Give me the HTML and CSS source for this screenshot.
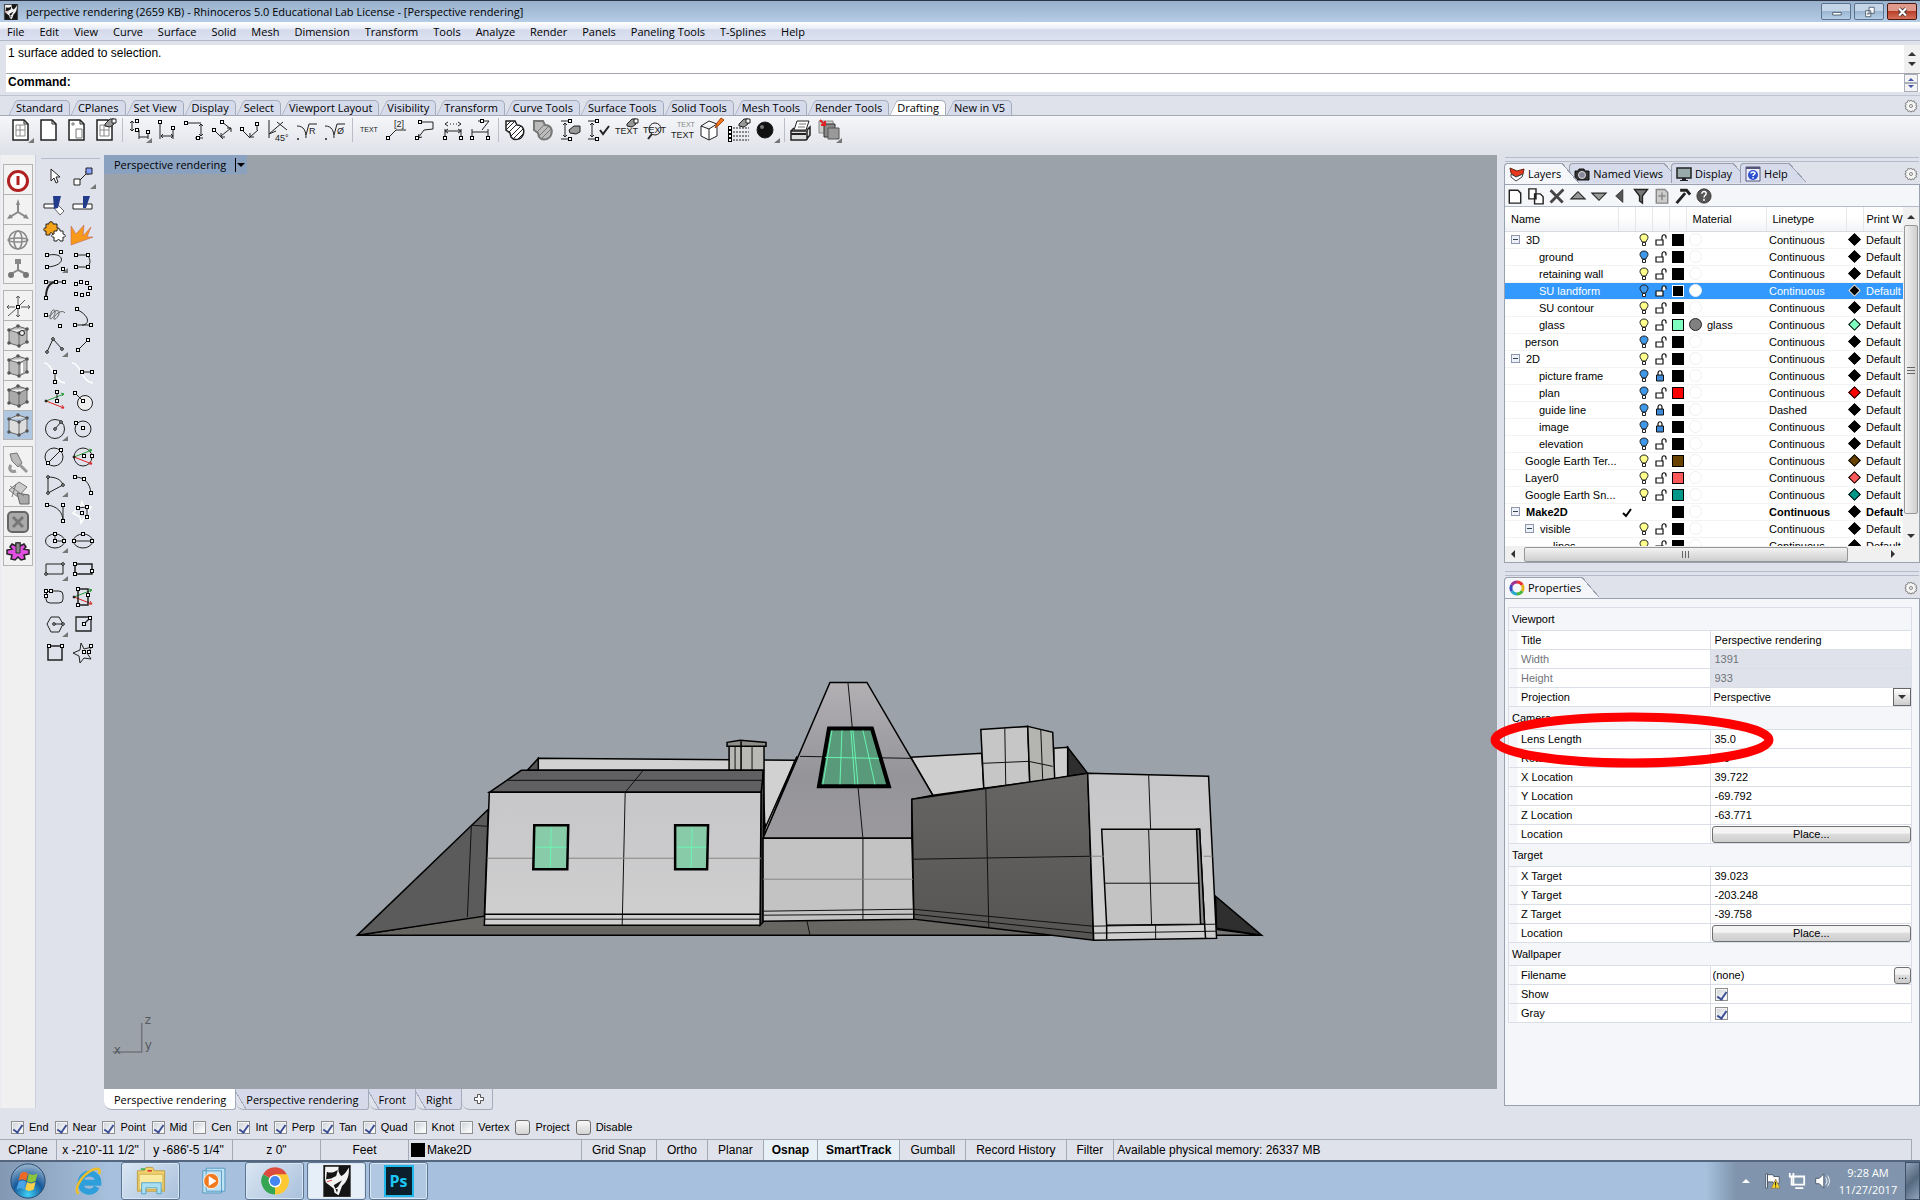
FILE: index.html
```
<!DOCTYPE html>
<html lang="en">
<head>
  <meta charset="UTF-8" />
  <meta name="viewport" content="width=device-width, initial-scale=1.0"/>
  <title>perpective rendering (2659 KB) - Rhinoceros 5.0</title>
  <link rel="stylesheet" href="styles.css">
</head>
<body>
  <svg class="defs" aria-hidden="true">
    <symbol id="gear" viewBox="0 0 14 14"><path d="M7 1l1 1.600 2-.8 .6 2 2 .6-.8 2L13.200 7l-1.400 1 .8 2-2 .6-.6 2-2-.8L7 13.200l-1-1.400-2 .8-.6-2-2-.6 .8-2L.8 7l1.400-1-.8-2 2-.6 .6-2 2 .8z" fill="#f4f4f4" stroke="#888"/><circle cx="7" cy="7" r="1.500" fill="none" stroke="#888"/></symbol>
    <symbol id="rhino" viewBox="0 0 32 38"><path fill="#151515" stroke="#555" d="M0 0h32v38H0z"/><path fill="#f2f2f2" d="M2 2h16c-1 4 0 8 3 11 3-1 6-4 9-10 1 9-2 17-8 22l-4 11-5-3-1-5-5-4-4-3c-2-5-1-12-1-19z"/><path fill="#151515" d="M4 8c4 2 8 1 13-2l-2 7-6 3-6 1zM12 24l10-6-5 8-3 2zM14 28l3 1-1 4z"/><path stroke="#d22" fill="none" d="M4 20l6-2"/></symbol>
    <symbol id="bulb" viewBox="0 0 10 14"><path stroke="#222" d="M5 1C2.500 1 1 2.500 1 4.500 1 6.500 3 7.500 3 9h4c0-1.500 2-2.500 2-4.500C9 2.500 7.500 1 5 1z"/><path fill="#fff" stroke="#222" d="M3.500 9.500h3v3h-3z"/></symbol>
    <symbol id="lock-open" viewBox="0 0 12 14"><path fill="#fff" stroke="#111" stroke-width="1.200" d="M1 7h7v5H1zM7 7V4c0-3 4-3 4 0v1.500"/></symbol>
    <symbol id="lock-shut" viewBox="0 0 12 14"><path fill="none" stroke="#111" stroke-width="1.200" d="M3 6V4c0-3 4-3 4 0v2"/><path fill="#3f8ad8" stroke="#111" d="M1.500 6h7v6h-7z"/></symbol>
    <symbol id="tick" viewBox="0 0 12 12"><path fill="none" stroke="#000" stroke-width="2" d="M2 7l3 3 5-7"/></symbol>
  </svg>

  <header class="titlebar">
    <svg class="title-icon"><use href="#rhino"/></svg>
    <h1>perpective rendering (2659 KB) - Rhinoceros 5.0 Educational Lab License - [Perspective rendering]</h1>
    <div class="window-buttons">
      <button aria-label="Minimize"><svg viewBox="0 0 16 14"><path fill="#fff" stroke="#456" d="M3.500 7.500h10v3h-10z"/></svg></button>
      <button aria-label="Restore"><svg viewBox="0 0 16 14"><path fill="#fff" stroke="#456" d="M7.500 1.500h6v7h-6zM3.500 5.500h6v7h-6z"/><path fill="#789" d="M5 8h3v2H5z"/></svg></button>
      <button class="close" aria-label="Close"><svg viewBox="0 0 16 14"><path stroke="#433" stroke-width="4.500" d="M4 3l8 8M12 3l-8 8"/><path stroke="#fff" stroke-width="2.500" d="M4 3l8 8M12 3l-8 8"/></svg></button>
    </div>
  </header>

  <nav class="menubar">
    <button>File</button><button>Edit</button><button>View</button><button>Curve</button><button>Surface</button><button>Solid</button><button>Mesh</button><button>Dimension</button><button>Transform</button><button>Tools</button><button>Analyze</button><button>Render</button><button>Panels</button><button>Paneling Tools</button><button>T-Splines</button><button>Help</button>
  </nav>

  <section class="command">
    <div class="history">
      <p>1 surface added to selection.</p>
      <div class="mini-scroll"><i class="arrow up"></i><i class="arrow down"></i></div>
    </div>
    <div class="prompt">
      <label for="cmd">Command:</label>
      <input id="cmd" type="text">
      <div class="spinner"><i class="arrow up"></i><i class="arrow down"></i></div>
    </div>
  </section>

  <div class="tool-tabs">
    <button>Standard</button><button>CPlanes</button><button>Set View</button><button>Display</button><button>Select</button><button>Viewport Layout</button><button>Visibility</button><button>Transform</button><button>Curve Tools</button><button>Surface Tools</button><button>Solid Tools</button><button>Mesh Tools</button><button>Render Tools</button><button class="active">Drafting</button><button>New in V5</button>
    <svg class="gear"><use href="#gear"/></svg>
  </div>
  <div class="toolbar" id="drafting"></div>

  <main class="workspace">
    <aside class="filter-bar" id="filters"></aside>
    <aside class="main-tools"><div class="tool-grid" id="mainTools"></div></aside>

    <section class="view">
      <div class="viewport">
        <button class="view-title">Perspective rendering <span><i class="arrow down"></i></span></button>
        <svg class="model" viewBox="104 155 1393 935" role="img" aria-label="House model">
          <defs>
            <linearGradient id="pyr" x1="0" y1="0" x2="0" y2="1"><stop offset="0" stop-color="#b2b0b3"/><stop offset=".6" stop-color="#959499"/><stop offset="1" stop-color="#9b999d"/></linearGradient>
            <linearGradient id="wall" x1="0" y1="0" x2="0" y2="1"><stop offset="0" stop-color="#c7c6c8"/><stop offset="1" stop-color="#d0cfd0"/></linearGradient>
            <linearGradient id="dark" x1="0" y1="0" x2="0" y2="1"><stop offset="0" stop-color="#666563"/><stop offset="1" stop-color="#565554"/></linearGradient>
          </defs>
          <g class="edge">
            <!-- ground and fins -->
            <path fill="#686663" d="M357 936l127-20 434-1 180 21z"/>
            <path fill="#5b5b5b" d="M357 936l131-126-4 107z"/>
            <path fill="#777" d="M1216 930l46 6h-46z"/>
            <path fill="#2f2f2f" d="M1216 897l46 39-45-7z"/>
            <!-- back walls -->
            <path fill="#d2d1d2" d="M538 759l257 2-30 75-2-65H538z"/>
            <path fill="#555" d="M527 771l11-12v12z"/>
            <path fill="#cfcecf" d="M911 758l71-4 2 35-51 7z"/>
            <path fill="#cfcecf" d="M1054 749l14-1v29l-14 3z"/>
            <path fill="#2e2e2e" d="M1068 748l20 26-20 3z"/>
            <!-- chimneys -->
            <path fill="#b8b8b4" d="M729 747h35v24h-35z"/>
            <path fill="#8e8e8b" d="M727 743l13-2 26 2v4h-39z"/>
            <path fill="#c6c6c7" d="M981 730l47-3 2 56-46 6z"/>
            <path fill="#b4b4b1" d="M1028 727l25 6 2 47-25 3z"/>
            <!-- left wing -->
            <path fill="#606063" d="M489 793l32-22h242l-1 22z"/>
            <path fill="#444" d="M761 793l3-22-1 152-3 3z"/>
            <path fill="url(#wall)" d="M489 793h272l-1 133H484z"/>
            <!-- centre -->
            <path fill="url(#pyr)" d="M830 683h37l66 113-21 4v39H763z"/>
            <path fill="#c4c3c4" d="M763 839h149l2 81-151 2z"/>
            <!-- garage -->
            <path fill="url(#dark)" d="M912 800l176-26 6 167-180-21z"/>
            <path fill="url(#wall)" d="M1088 774l121 3 8 162-123 2z"/>
            <path fill="#c4c3c4" d="M1102 830h98l5 95-98 1z"/>
            <path fill="#888" d="M1197 830h3l5 95h-4z"/>
          </g>
          <path class="thin" d="M471 827l-4 91M471 826l16 1M807 922l3 14M507 781h256M643 771l-18 22M625 793l-3 133M484 920h277M735 747v24M752 747v24M848 683l15 156v81M800 757l111 2M763 912l150-2M763 916l150-1M1005 729l1 57M982 764l47-2 24 5M1041 730l2 51M986 789l3 139M912 860l179-3M913 910l180 17M913 915l181 19M1149 775l2 55M1093 927l124-2M1094 934l123-2M1149 830l3 96M1105 884h95M1156 926v14"/>
          <path class="soft" d="M487 859h274M763 880h150M1091 857h13M1204 857h9"/>
          <path class="edge" fill="none" d="M484 915h277M741 742v29M797 757l-32 72M1107 926v14M1205 925l1 14M765 824v6"/>
          <path class="glass" d="M534 826h34l-1 44h-34zM675 826h33l-1 44h-32z"/>
          <path class="glow" d="M551 828l-1 40M536 848h30M692 828l-1 40M677 848h29"/>
          <path class="glass deep" d="M829 729h43l17 58-70 0z"/>
          <path class="glow" d="M825 758l54 1M832 731l-9 54M842 731l-2 54M851 731l4 54M853 731l5 54M863 731l12 54"/>
          <g class="axis"><path d="M141 1024v29h-29"/><text x="144" y="1025">z</text><text x="144" y="1050">y</text><text x="113" y="1055">x</text></g>
        </svg>
      </div>
      <div class="view-tabs">
        <button class="active">Perspective rendering</button><button>Perspective rendering</button><button>Front</button><button>Right</button><button class="plus" aria-label="New viewport"><svg viewBox="0 0 10 10"><path fill="#fff" stroke="#555" d="M3.500 .5h3v3h3v3h-3v3h-3v-3h-3v-3h3z"/></svg></button>
      </div>
    </section>

    <aside class="panels">
      <section class="panel layers">
        <div class="panel-tabs">
          <button class="active"><svg viewBox="0 0 16 16"><path fill="#e8371c" stroke="#621" d="M1 2l7 3 7-2-1 5-7 3-5-4z"/><path fill="#fff" stroke="#444" d="M2 8l5 3 7-3-1 3-6 4-5-4z"/></svg>Layers</button>
          <button><svg viewBox="0 0 16 16"><path fill="#333" stroke="#111" d="M1 5h3l1-2h5l1 2h4v9H1z"/><circle cx="8" cy="9" r="3.500" fill="#889" stroke="#ddd"/></svg>Named Views</button>
          <button><svg viewBox="0 0 16 16"><path fill="#9aa" stroke="#222" stroke-width="1.500" d="M1 2h14v10H1z"/><path fill="#222" d="M6 12h4v2h2v1H4v-1h2z"/></svg>Display</button>
          <button><svg viewBox="0 0 16 16"><path fill="#eef" stroke="#557" d="M1 1h14v14H1z"/><path fill="#557" d="M1 1h14v2H1z"/><circle cx="8" cy="9" r="5" fill="#2a4fd0"/><path fill="none" stroke="#fff" stroke-width="1.500" d="M6 7.500c0-2 4-2 4 0 0 1-2 1-2 2.500M8 11v1.500"/></svg>Help</button>
          <svg class="gear"><use href="#gear"/></svg>
        </div>
        <div class="layer-tools" id="layerTools"></div>
        <div class="layer-grid">
          <div class="layer-scroll">
            <table class="layer-table">
              <colgroup><col class="c-name"><col class="c-ico"><col class="c-ico"><col class="c-ico"><col class="c-ico"><col class="c-wide"><col class="c-wide"><col class="c-ico"><col></colgroup>
              <thead><tr><th>Name</th><th></th><th></th><th></th><th></th><th>Material</th><th>Linetype</th><th></th><th class="last">Print W</th></tr></thead>
              <tbody id="layerRows"></tbody>
            </table>
          </div>
          <div class="vscroll"><i class="arrow up"></i><div class="thumb"></div><i class="arrow down"></i></div>
        </div>
        <div class="hscroll"><i class="arrow left"></i><div class="thumb"></div><i class="arrow right"></i></div>
      </section>

      <section class="panel props">
        <div class="panel-tabs">
          <button class="active"><svg viewBox="0 0 16 16" fill="none" stroke-width="3"><path stroke="#e33" d="M8 2a6 6 0 0 1 5.200 3"/><path stroke="#e5b21c" d="M13.200 5a6 6 0 0 1 0 6"/><path stroke="#4cb83a" d="M13.200 11A6 6 0 0 1 8 14"/><path stroke="#28a9c9" d="M8 14a6 6 0 0 1-5.200-3"/><path stroke="#3a49c0" d="M2.800 11a6 6 0 0 1 0-6"/><path stroke="#a2318f" d="M2.800 5A6 6 0 0 1 8 2"/></svg>Properties</button>
          <svg class="gear"><use href="#gear"/></svg>
        </div>
        <table class="prop-table">
          <tbody>
            <tr class="group"><th colspan="2">Viewport</th></tr>
            <tr><th><label for="p-title">Title</label></th><td><input id="p-title" type="text" value="Perspective rendering"></td></tr>
            <tr class="off"><th><label for="p-w">Width</label></th><td><input id="p-w" type="text" value="1391" disabled></td></tr>
            <tr class="off"><th><label for="p-h">Height</label></th><td><input id="p-h" type="text" value="933" disabled></td></tr>
            <tr><th><label for="p-proj">Projection</label></th><td class="select-cell"><select id="p-proj"><option>Perspective</option><option>Parallel</option></select><span class="drop"><i class="arrow down"></i></span></td></tr>
            <tr class="group"><th colspan="2">Camera</th></tr>
            <tr><th><label for="p-lens">Lens Length</label></th><td><input id="p-lens" type="text" value="35.0"></td></tr>
            <tr><th><label for="p-rot">Rotation</label></th><td><input id="p-rot" type="text" value="0.0"></td></tr>
            <tr><th><label for="p-x">X Location</label></th><td><input id="p-x" type="text" value="39.722"></td></tr>
            <tr><th><label for="p-y">Y Location</label></th><td><input id="p-y" type="text" value="-69.792"></td></tr>
            <tr><th><label for="p-z">Z Location</label></th><td><input id="p-z" type="text" value="-63.771"></td></tr>
            <tr><th><label for="p-loc">Location</label></th><td><button id="p-loc" class="place">Place...</button></td></tr>
            <tr class="group"><th colspan="2">Target</th></tr>
            <tr><th><label for="t-x">X Target</label></th><td><input id="t-x" type="text" value="39.023"></td></tr>
            <tr><th><label for="t-y">Y Target</label></th><td><input id="t-y" type="text" value="-203.248"></td></tr>
            <tr><th><label for="t-z">Z Target</label></th><td><input id="t-z" type="text" value="-39.758"></td></tr>
            <tr><th><label for="t-loc">Location</label></th><td><button id="t-loc" class="place">Place...</button></td></tr>
            <tr class="group"><th colspan="2">Wallpaper</th></tr>
            <tr><th><label for="w-file">Filename</label></th><td><div class="file-cell"><input id="w-file" type="text" value="(none)"><button class="dots">...</button></div></td></tr>
            <tr><th><label for="w-show">Show</label></th><td><input id="w-show" type="checkbox" checked></td></tr>
            <tr><th><label for="w-gray">Gray</label></th><td><input id="w-gray" type="checkbox" checked></td></tr>
          </tbody>
        </table>
        <svg class="mark" viewBox="0 0 284 56"><ellipse cx="142" cy="28" rx="137" ry="23"/></svg>
      </section>
    </aside>
  </main>

  <div class="osnap">
    <label><input type="checkbox" checked>End</label>
    <label><input type="checkbox" checked>Near</label>
    <label><input type="checkbox" checked>Point</label>
    <label><input type="checkbox" checked>Mid</label>
    <label><input type="checkbox">Cen</label>
    <label><input type="checkbox" checked>Int</label>
    <label><input type="checkbox" checked>Perp</label>
    <label><input type="checkbox" checked>Tan</label>
    <label><input type="checkbox" checked>Quad</label>
    <label><input type="checkbox">Knot</label>
    <label><input type="checkbox">Vertex</label>
    <label class="push"><input type="checkbox">Project</label>
    <label class="push"><input type="checkbox">Disable</label>
  </div>

  <footer class="status">
    <span class="w-cplane">CPlane</span><span class="w-coord">x -210'-11 1/2"</span><span class="w-coord">y -686'-5 1/4"</span><span class="w-coord">z 0"</span><span class="w-coord">Feet</span>
    <span class="w-layer"><i class="swatch"></i>Make2D</span>
    <button>Grid Snap</button><button>Ortho</button><button>Planar</button><button class="on">Osnap</button><button class="on">SmartTrack</button><button>Gumball</button><button>Record History</button><button>Filter</button>
    <span class="w-mem">Available physical memory: 26337 MB</span>
  </footer>

  <div class="taskbar">
    <button class="task start" aria-label="Start"><svg viewBox="0 0 40 40">
      <defs><radialGradient id="orb" cx=".5" cy=".9" r=".9"><stop offset="0" stop-color="#3fd0f5"/><stop offset=".5" stop-color="#17599b"/><stop offset="1" stop-color="#9fb9cf"/></radialGradient></defs>
      <circle cx="20" cy="20" r="18" fill="url(#orb)" stroke="#24486e"/>
      <path fill="#ee6a26" d="M12 12c3-2 5-2 8 0l-2 8c-3-2-5-2-8 0z"/><path fill="#8cc43c" d="M21 12c3 2 5 2 9 0l-2 8c-4 2-6 2-9 0z"/><path fill="#4ba3e8" d="M10 21c3-2 5-2 8 0l-2 8c-3-2-5-2-8 0z"/><path fill="#fbd04a" d="M19 21c3 2 5 2 9 0l-2 8c-4 2-6 2-9 0z"/></svg></button>
    <button class="task" aria-label="Internet Explorer"><svg viewBox="0 0 40 40"><path fill="none" stroke="#2f9fdc" stroke-width="7" d="M10 22h21c0-14-20-15-21 0 0 12 15 14 19 5"/><path fill="none" stroke="#eebd2c" stroke-width="3" d="M8 35c-7-4 3-22 16-28 7-3 10-1 8 5"/></svg></button>
    <button class="task framed" aria-label="Explorer"><svg viewBox="0 0 40 40"><path fill="#f0d36c" stroke="#b8953a" d="M4 8h8l2-4h8l2 4h12v24H4z"/><path fill="#fbeaa0" stroke="#cba94c" d="M6 12h28v18H6z"/><path fill="#3fb24a" d="M8 5h5v2H8z"/><path fill="#d33" d="M16 7h5v2h-5z"/><path fill="#a9dff2" stroke="#4a9cc4" d="M9 35V22h23v13h-5v-7H14v7z"/></svg></button>
    <button class="task" aria-label="Media Player"><svg viewBox="0 0 40 40"><path fill="#bfe3f3" stroke="#4a91bd" d="M12 5h22v27H12zM8 8h22v26H8z"/><circle cx="18" cy="20" r="9" fill="#f07a1d" stroke="#fff"/><path fill="#fff" d="M15 14l9 6-9 6z"/></svg></button>
    <button class="task framed" aria-label="Chrome"><svg viewBox="0 0 40 40"><path fill="#dd4b3e" d="M20 20L6 12a16 16 0 0 1 28 0z"/><path fill="#fcc934" d="M20 20l14-8a16 16 0 0 1-14 24z"/><path fill="#35a553" d="M20 20v16A16 16 0 0 1 6 12z"/><path fill="#fcc934" d="M20 36l7-13-7-11 14 0a16 16 0 0 1-14 24z"/><circle cx="20" cy="20" r="7.500" fill="#fff"/><circle cx="20" cy="20" r="6" fill="#4487f2"/></svg></button>
    <button class="task framed current" aria-label="Rhinoceros"><svg><use href="#rhino"/></svg></button>
    <button class="task framed ps">Ps</button>
    <div class="tray">
      <i class="arrow up"></i>
      <svg viewBox="0 0 20 20"><path fill="#fff" stroke="#456" d="M3 2h2v16H3zM5 3h6l1 2h6v8h-6l-1-2H5z"/><path fill="#f8d822" stroke="#876" d="M14 8l5 10H9z"/><path stroke="#000" d="M14 11v4M14 16v1"/></svg>
      <svg viewBox="0 0 20 20"><path fill="#8298ae" stroke="#fff" stroke-width="2" d="M6 5h12v9H6zM8 18h9"/><path fill="none" stroke="#fff" stroke-width="2" d="M2 1v4h4V1M4 5v9h3"/></svg>
      <svg viewBox="0 0 20 20"><path fill="#fff" stroke="#456" d="M3 7h4l5-5v16l-5-5H3z"/><path fill="none" stroke="#fff" d="M14 6c2 3 2 5 0 8M16 4c3 4 3 8 0 12"/></svg>
      <time class="clock">9:28 AM<br>11/27/2017</time>
      <button class="show-desktop" aria-label="Show desktop"></button>
    </div>
  </div>

  <script src="script.js"></script>
</body>
</html>
```
FILE: styles.css
```
* {
  box-sizing: border-box;
}
body {
  margin: 0;
  height: 100vh;
  display: flex;
  flex-direction: column;
  overflow: hidden;
  background: #dfe2ea;
  color: #000;
  font: 11px/16px "Liberation Sans", Arial, sans-serif;
}
button, input, select {
  font: inherit;
  color: inherit;
  margin: 0;
  padding: 0;
  border: 0;
  background: none;
}
svg {
  display: block;
}
.defs {
  position: absolute;
  width: 0;
  height: 0;
}
.gear {
  width: 14px;
  height: 14px;
  margin-left: auto;
  align-self: center;
}

/* small triangles used by the scroll bars and drop-downs */
.arrow {
  display: inline-block;
  width: 0;
  height: 0;
  border: 4px solid transparent;
}
.arrow.up { border-top: 0; border-bottom-color: #333; }
.arrow.down { border-bottom: 0; border-top-color: #333; }
.arrow.left { border-left: 0; border-right-color: #333; }
.arrow.right { border-right: 0; border-left-color: #333; }

/* title bar */
.titlebar {
  flex: 0 0 22px;
  display: flex;
  align-items: center;
  gap: 7px;
  padding: 0 3px;
  border-top: 1px solid #2c3448;
  background: linear-gradient(#98b0ca, #b5cce6);
}
.title-icon {
  width: 16px;
  height: 16px;
}
.titlebar h1 {
  margin: 0;
  font: 11px/16px "Open Sans", sans-serif;
}
.window-buttons {
  display: flex;
  gap: 3px;
  margin-left: auto;
}
.window-buttons button {
  width: 30px;
  height: 17px;
  display: flex;
  align-items: center;
  justify-content: center;
  border: 1px solid #5a7391;
  border-radius: 2px;
  background: linear-gradient(#c4d5e8 50%, #9bb6d2 50%, #b7cfe6);
}
.window-buttons .close {
  border-color: #4d1710;
  background: linear-gradient(#e09a8c 50%, #b8402a 50%, #d4705a);
}
.window-buttons svg {
  width: 15px;
  height: 12px;
}

/* menu */
.menubar {
  flex: 0 0 19px;
  display: flex;
  border-bottom: 1px solid #b0b8c8;
  background: linear-gradient(#fff, #e6ebf5 40%, #d4daeb 42%, #dde2f2);
}
.menubar button {
  padding: 2px 8px 0 7px;
  font: 11px/16px "Open Sans", sans-serif;
}

/* command line */
.command {
  flex: 0 0 54px;
  padding: 4px 0 3px 6px;
  font-size: 12px;
}
.history, .prompt {
  display: flex;
  background: #fff;
}
.history {
  height: 29px;
  border-bottom: 1px solid #a0a5ad;
}
.history p {
  flex: 1;
  margin: 0;
  padding-left: 2px;
}
.prompt {
  height: 18px;
  line-height: 16px;
}
.prompt label {
  padding-left: 2px;
  font-weight: bold;
}
.prompt input {
  flex: 1;
}
.mini-scroll, .spinner {
  width: 16px;
  display: flex;
  flex-direction: column;
  align-items: center;
  justify-content: space-evenly;
  background: #f0f0f0;
}
.spinner {
  width: 14px;
  margin-right: 2px;
  border: 1px solid #a8afbb;
  background: linear-gradient(#f4f4f4 45%, #a8afbb 45%, #a8afbb 55%, #f4f4f4 55%);
}
.spinner .arrow {
  border-width: 3px;
}
.spinner .up { border-top: 0; border-bottom-color: #4556a8; }
.spinner .down { border-bottom: 0; border-top-color: #4556a8; }

/* tool tabs and the strip below them */
.tool-tabs {
  flex: 0 0 21px;
  display: flex;
  align-items: flex-end;
  padding: 0 2px 0 8px;
  border-top: 1px solid #bcc5d1;
  border-bottom: 1px solid #a3aab6;
}
.tool-tabs button {
  position: relative;
  z-index: 0;
  height: 15px;
  padding: 0 7px 0 8px;
  font: 11px/15px "Open Sans", sans-serif;
}
.tool-tabs button::before, .tool-tabs button::after {
  content: "";
  position: absolute;
  z-index: -1;
  top: 0;
  bottom: 0;
  background: #d5dbeb;
  border-top: 1px solid #a3acbc;
}
.tool-tabs button::before {
  left: 4px;
  width: 50%;
  border-left: 1px solid #a3acbc;
  border-radius: 3px 0 0 0;
  transform: skewX(-25deg);
}
.tool-tabs button::after {
  left: 30%;
  right: 0;
  border-right: 1px solid #a3acbc;
  border-radius: 0 5px 0 0;
}
.tool-tabs .active::before, .tool-tabs .active::after {
  background: #fff;
}
.toolbar {
  flex: 0 0 39px;
  display: flex;
  padding: 0 7px;
  background: linear-gradient(#f5f6f9, #dee1e8);
}
.toolbar hr {
  width: 1px;
  height: 24px;
  margin: 2px 2px 2px 3px;
  border: 0;
  background: #b9bec8;
}
.tool, .tool svg {
  width: 28px;
  height: 28px;
}
.ico {
  fill: none;
  stroke: #222;
}
.ico .node {
  fill: #fff;
  stroke: #000;
}
.ico .fly {
  fill: #777;
  stroke: none;
}
.ico text {
  fill: #222;
  stroke: none;
  font: 9px "Liberation Sans", sans-serif;
}
.ico .tiny {
  font-size: 7px;
}
.ico .pale {
  fill: #888;
}

/* workspace */
.workspace {
  flex: 1;
  min-height: 0;
  display: flex;
}
.filter-bar {
  width: 36px;
  margin-bottom: 9px;
  padding: 9px 3px 0 2px;
  border-left: 1px solid #e8ebf2;
  border-right: 1px solid #c9cfdb;
  background: #f0f0f0;
}
.filter-bar button {
  display: block;
  width: 30px;
  height: 30px;
  border: 1px solid #b4b4b4;
  border-bottom-width: 0;
  background: #f2f2f2;
}
.filter-bar button.last {
  border-bottom-width: 1px;
  margin-bottom: 6px;
}
.filter-bar button.on {
  background: #b0c7e2;
}
.filter-bar svg {
  width: 28px;
  height: 28px;
}
.main-tools {
  width: 68px;
  padding: 3px 4px 0 5px;
}
.tool-grid {
  display: grid;
  grid-template-columns: 28px 28px;
  padding-top: 3px;
  border-top: 1px solid #b4bccb;
}
.view {
  flex: 1;
  min-width: 0;
  display: flex;
  flex-direction: column;
}
.viewport {
  position: relative;
  flex: 1;
  min-height: 0;
  background: #9ba2aa;
}
.view-title {
  position: absolute;
  left: 0;
  top: 0;
  display: flex;
  align-items: center;
  gap: 9px;
  height: 19px;
  padding: 0 2px 0 10px;
  background: #8aa2c0;
  font: 11px/18px "Open Sans", sans-serif;
}
.view-title span {
  display: flex;
  align-items: center;
  height: 14px;
  padding-left: 1px;
  border-left: 1px solid #000;
}
.view-title .arrow {
  border-top-color: #000;
}
.model {
  width: 100%;
  height: 100%;
}
.edge {
  stroke: #000;
  stroke-width: 1.500;
}
.thin, .soft, .glow {
  fill: none;
  stroke: #111;
  stroke-width: 1;
}
.soft { stroke: #888; }
.glow { stroke: #69f5b2; }
.glass {
  fill: #87cba8;
  stroke: #000;
  stroke-width: 2.500;
}
.glass.deep {
  fill: #589a7a;
  stroke-width: 4;
}
.axis path {
  fill: none;
  stroke: #70757b;
  stroke-width: 1.500;
}
.axis text {
  fill: #55595e;
  font: 12px "DejaVu Sans", sans-serif;
}
.view-tabs {
  display: flex;
  height: 28px;
  font: 11px/21px "Open Sans", sans-serif;
}
.view-tabs button {
  height: 21px;
  padding: 0 9px 0 10px;
  background: linear-gradient(60deg, transparent 8px, #a3acbc 8px, #a3acbc 9px, #d5d9ea 9px);
  border-right: 1px solid #a3acbc;
  border-bottom: 1px solid #a3acbc;
  border-radius: 0 0 3px 8px;
}
.view-tabs .active {
  background: #fff;
}
.view-tabs .plus {
  padding: 0 8px 0 12px;
  background: none;
}
.plus svg {
  width: 10px;
  height: 10px;
}

/* right side panels */
.panels {
  width: 423px;
  display: flex;
  flex-direction: column;
  gap: 14px;
  padding: 8px 0 11px 7px;
}
.panel {
  position: relative;
  display: flex;
  flex-direction: column;
  border: 1px solid #9aa2b0;
  border-top: 0;
  background: #f5f6fa;
}
.panel::before {
  content: "";
  position: absolute;
  left: 0;
  right: 0;
  top: -6px;
  height: 3px;
  border: solid #b4bccb;
  border-width: 1px 0;
}
.layers {
  flex: 0 0 400px;
  min-height: 0;
}
.props {
  flex: 1;
}
.panel-tabs {
  flex: 0 0 21px;
  display: flex;
  margin: 0 -1px;
  padding-right: 2px;
  background: #dfe2ea;
  border-bottom: 1px solid #9aa2b0;
  font: 11px/20px "Open Sans", sans-serif;
}
.panel-tabs button {
  position: relative;
  z-index: 1;
  display: flex;
  align-items: center;
  gap: 3px;
  height: 20px;
  margin-right: 8px;
  padding: 0 0 0 4px;
  border: solid #9aa2b0;
  border-width: 1px 0 0 1px;
  border-radius: 4px 0 0 0;
  background: #d5dbeb;
}
.panel-tabs button::after {
  content: "";
  position: absolute;
  z-index: -1;
  top: -1px;
  left: 100%;
  width: 18px;
  height: 20px;
  background: linear-gradient(to top right, #d5dbeb 50%, #9aa2b0 50%, #9aa2b0 54%, transparent 54%);
}
.panel-tabs .active {
  z-index: 2;
  height: 21px;
  background: #f5f6fa;
}
.panel-tabs .active::after {
  height: 21px;
  background: linear-gradient(to top right, #f5f6fa 50%, #9aa2b0 50%, #9aa2b0 54%, transparent 54%);
}
.panel-tabs button svg {
  width: 16px;
  height: 16px;
}
.layer-tools {
  flex: 0 0 22px;
  display: flex;
  border-bottom: 1px solid #b4bccb;
}
.layer-tools button {
  width: 21px;
  height: 21px;
}
.layer-tools svg {
  width: 20px;
  height: 20px;
}
.layer-grid {
  flex: 1;
  min-height: 0;
  display: flex;
  background: #fff;
}
.layer-scroll {
  flex: 1;
  min-width: 0;
  overflow: hidden;
}
.layer-table {
  width: 100%;
  table-layout: fixed;
  border-collapse: collapse;
  line-height: 16px;
}
.layer-table .c-name { width: 113px; }
.layer-table .c-ico { width: 17px; }
.layer-table .c-wide { width: 80px; }
.layer-table th {
  height: 24px;
  padding: 0 0 0 6px;
  border-right: 1px solid #e4e6ea;
  border-bottom: 1px solid #d8dbe0;
  background: linear-gradient(#fff 40%, #f2f3f6);
  font-weight: normal;
  text-align: left;
  white-space: nowrap;
}
.layer-table th.last {
  padding-left: 3px;
  border-right: 0;
}
.layer-table td {
  height: 17px;
  padding: 0;
  border-bottom: 1px solid #f3f3f3;
  white-space: nowrap;
  overflow: hidden;
}
.layer-table td.line { padding-left: 3px; }
.layer-table td svg {
  width: 12px;
  height: 14px;
  margin: 0 auto;
}
.layer-table .name {
  display: flex;
  align-items: center;
  gap: 6px;
  padding-left: 20px;
}
.layer-table .d1 .name { padding-left: 34px; }
.layer-table .d2 .name { padding-left: 48px; }
.layer-table .open .name { padding-left: 6px; }
.layer-table .d1.open .name { padding-left: 20px; }
.box {
  width: 9px;
  height: 9px;
  border: 1px solid #8a97ad;
  background: linear-gradient(#345, #345) center / 5px 1px no-repeat, #eef2f8;
}
.chip {
  width: 12px;
  height: 12px;
  margin: 0 auto;
  border: 1px solid #000;
}
.gem {
  width: 9px;
  height: 9px;
  margin: 0 auto;
  border: 1px solid #000;
  transform: rotate(45deg);
}
.mat {
  display: flex;
  align-items: center;
  gap: 5px;
  padding-left: 3px;
}
.ball {
  width: 13px;
  height: 13px;
  border: 1px solid #f0f0f0;
  border-radius: 50%;
}
.ball.filled { border-color: #222; background: #808080; }
.selected td {
  background: #3399ff;
  color: #fff;
}
.selected .ball { background: #fff; }
.selected .chip, .selected .gem { border-color: #fff; }
.current-layer { font-weight: bold; }
.vscroll, .hscroll {
  display: flex;
  align-items: center;
  background: #f0f0f0;
}
.vscroll {
  width: 16px;
  flex-direction: column;
  padding: 8px 0;
  gap: 6px;
}
.vscroll .down { margin-top: 14px; }
.vscroll .thumb {
  flex: 1;
  width: 14px;
}
.hscroll {
  flex: 0 0 16px;
  padding: 0 24px 0 6px;
  gap: 9px;
}
.hscroll .thumb {
  flex: 1;
  height: 15px;
  margin-right: 34px;
}
.thumb {
  position: relative;
  border: 1px solid #979797;
  border-radius: 2px;
  background: linear-gradient(#f3f3f3, #e0e0e0 50%, #cfcfd1);
}
.thumb::after {
  content: "";
  position: absolute;
  left: calc(50% - 4px);
  top: calc(50% - 3px);
  width: 8px;
  height: 7px;
  background: repeating-linear-gradient(90deg, #666 0 1px, transparent 1px 3px);
}
.vscroll .thumb {
  background: linear-gradient(90deg, #f3f3f3, #e0e0e0 50%, #cfcfd1);
}
.vscroll .thumb::after {
  background: repeating-linear-gradient(#666 0 1px, transparent 1px 3px);
}

/* properties */
.prop-table {
  width: auto;
  margin: 8px 7px 0 3px;
  table-layout: fixed;
  border-collapse: collapse;
  border: 1px solid #dadee6;
}
.prop-table th {
  width: 50%;
  height: 19px;
  padding: 0 0 0 12px;
  border: 1px solid #dadee6;
  background: linear-gradient(90deg, #f5f6fa 8px, #fff 8px);
  font-weight: normal;
  text-align: left;
}
.prop-table .group th {
  height: 23px;
  padding-left: 3px;
  background: #f5f6fa;
}
.prop-table td {
  padding: 0;
  border: 1px solid #dadee6;
  background: #fff;
}
.prop-table input[type="text"] {
  display: block;
  width: 100%;
  height: 18px;
  padding-left: 4px;
}
.prop-table .off, .prop-table .off input {
  color: #70747a;
}
.prop-table .off td {
  background: #dfe2ea;
}
.prop-table .select-cell {
  position: relative;
}
.prop-table select {
  display: block;
  width: 100%;
  height: 18px;
  padding-left: 3px;
  appearance: none;
}
.drop {
  position: absolute;
  right: 0;
  top: 0;
  width: 18px;
  height: 18px;
  display: flex;
  align-items: center;
  justify-content: center;
  border: 1px solid #666;
  background: linear-gradient(#fff, #ccc);
  pointer-events: none;
}
.place, .dots {
  height: 17px;
  border: 1px solid #707070;
  border-radius: 3px;
  background: linear-gradient(#f4f4f4 40%, #dcdcdc 50%, #cdcdcd);
  line-height: 14px;
}
.place {
  display: block;
  width: calc(100% - 1px);
  margin-left: 1px;
}
.file-cell {
  display: flex;
  align-items: center;
}
.file-cell .dots {
  flex: 0 0 17px;
}
.prop-table .file-cell input {
  padding-left: 2px;
}
.prop-table input[type="checkbox"] {
  margin-left: 4px;
}
input[type="checkbox"] {
  appearance: none;
  display: block;
  width: 13px;
  height: 13px;
  border: 1px solid #8e8f8f;
  background: linear-gradient(135deg, #cfd4da, #fff) content-box, #f4f4f4;
  padding: 1px;
}
input[type="checkbox"]:checked::after {
  content: "";
  display: block;
  width: 4px;
  height: 8px;
  margin-left: 2px;
  border: solid #3d4f96;
  border-width: 0 2px 2px 0;
  transform: rotate(35deg);
}
.mark {
  position: absolute;
  left: -15px;
  top: 135px;
  z-index: 3;
  width: 284px;
  height: 56px;
  pointer-events: none;
}
.mark ellipse {
  fill: none;
  stroke: #ff0000;
  stroke-width: 9;
}

/* object snaps */
.osnap {
  flex: 0 0 22px;
  display: flex;
  align-items: center;
  gap: 6px;
  padding: 0 0 2px 11px;
}
.osnap label {
  display: flex;
  align-items: center;
  gap: 5px;
}
.osnap .push input {
  width: 15px;
  height: 15px;
  border-color: #707070;
  border-radius: 3px;
  background: linear-gradient(#f8f8f8, #d4d4d4);
}

/* status bar */
.status {
  flex: 0 0 20px;
  display: flex;
  margin-right: 8px;
  border-top: 1px solid #a3aab6;
  border-right: 1px solid #a3aab6;
  font-size: 12px;
  line-height: 20px;
  white-space: nowrap;
}
.status > * {
  border-right: 1px solid #a3aab6;
  text-align: center;
}
.status button {
  padding: 0 10px;
}
.status .on {
  padding: 0 8px;
  font-weight: bold;
  background: #e8f1f8;
}
.w-cplane { width: 57px; }
.w-coord { width: 88px; }
.status .w-layer {
  width: 173px;
  display: flex;
  align-items: center;
  gap: 2px;
  padding-left: 2px;
}
.swatch {
  width: 14px;
  height: 14px;
  background: #000;
}
.status .w-mem {
  border: 0;
  padding-left: 3px;
}

/* taskbar */
.taskbar {
  flex: 0 0 40px;
  display: flex;
  gap: 3px;
  border-top: 2px solid #55677e;
  background: linear-gradient(90deg, #8398b2, #a6c0dd 110px);
}
.task {
  width: 59px;
  height: 38px;
  display: flex;
  align-items: center;
  justify-content: center;
}
.task svg {
  width: 34px;
  height: 34px;
}
.task.start {
  width: 56px;
}
.start svg {
  width: 38px;
  height: 38px;
}
.framed {
  border: 1px solid #5d7590;
  border-radius: 3px;
  background: linear-gradient(135deg, #dae6f3, #a9c1dc);
  box-shadow: inset 0 0 0 1px #d9e6f4;
}
.current {
  background: #e6eef7;
}
.current svg {
  height: 32px;
}
.ps {
  color: #1fc6f5;
  font: bold 16px "Open Sans", sans-serif;
  background: linear-gradient(#0b1f2c, #0b1f2c) center / 26px 28px no-repeat, linear-gradient(#20b8e8, #20b8e8) center / 30px 32px no-repeat, #b0c8e1;
}
.tray {
  display: flex;
  align-items: center;
  gap: 7px;
  margin-left: auto;
  padding-left: 36px;
  color: #fff;
  background: linear-gradient(90deg, transparent, #8095ad 30px);
}
.tray svg {
  width: 18px;
  height: 18px;
}
.tray .up {
  margin-right: 6px;
  border-bottom-color: #fff;
}
.clock {
  width: 60px;
  font: 11px/17px "Open Sans", sans-serif;
  text-align: center;
}
.show-desktop {
  width: 15px;
  height: 38px;
  border: 1px solid #3c4f66;
  background: linear-gradient(135deg, #8fa2b8, #55697f 50%, #8ea2b9);
}
```
FILE: script.js
```
// ---- icon helpers ----
const nodes = (...pts) => pts.map(([x, y]) => `<rect class="node" x="${x - 1.5}" y="${y - 1.5}" width="3" height="3"/>`).join('');
const dots = (...pts) => pts.map(([x, y]) => `<circle class="node" cx="${x}" cy="${y}" r="1.3"/>`).join('');
const line = (d, extra = '') => `<path d="${d}" ${extra}/>`;
const fly = '<path class="fly" d="M27 22v5h-6z"/>';
const axes = '<path stroke="#2a9c3a" d="M5 15L23 8M20 7l3 1-2 2"/><path stroke="#d22" d="M5 15l18 7M20 22l3 0-2-3"/><circle cx="5" cy="15" r="1" fill="#000"/>';
const white = 'stroke="#fff" stroke-width="1.5"';
const hand = '<path fill="#999" d="M14 8l5-5h4v5l-4 3-5-1z"/><path fill="#fff" d="M21 3h4v4h-4z"/>';
const page = '<path fill="#fff" stroke-width="1.5" d="M6 4h11l4 4v16H6z"/><path d="M17 4v4h4"/>';

function tool(label, body, cls = 'tool') {
  return `<button class="${cls}" aria-label="${label}"><svg class="ico" viewBox="0 0 28 28">${body}</svg></button>`;
}

// ---- drafting toolbar ----
const drafting = [
  ['Layout', page + line('M9 9h9v11H9zM13 9v11M9 14h9', 'stroke="#888"') + fly],
  ['New layout', page],
  ['Copy layout', page + line('M13 13h6v9h-6zM8 8h4M10 6v4', 'stroke="#777"')],
  ['Layout properties', page + line('M9 9h9v11H9zM13 9v11M9 14h9', 'stroke="#888"') + hand],
  null,
  ['Dimension', line('M7 5v10M5 7l2-2 2 2M5 13l2 2 2-2M14 14v9M14 21h9M23 18v5') + nodes([12, 5], [12, 14], [23, 16]) + fly],
  ['Horizontal dimension', line('M7 7v16M8 20h12M20 12v11M10 18l-2 2 2 2M18 18l2 2-2 2') + nodes([7, 6], [20, 12])],
  ['Vertical dimension', line('M6 7h14M20 8v12M14 22h8M18 10l2-2 2 2M18 18l2 2 2-2') + nodes([5, 7], [17, 22])],
  ['Aligned dimension', line('M5 14l9 9M12 20L22 12M13 6l9 7M12 17v4h4M18 12h4v4') + nodes([5, 14], [13, 6])],
  ['Rotated dimension', line('M5 14l8 8M13 21l8-7M20 8v6M13 17v4h4') + nodes([5, 13], [20, 8])],
  ['Angle dimension', line('M4 4v18M4 18L18 6M12 6l10 8M4 18l7-3') + '<text x="10" y="25">45°</text>'],
  ['Radius dimension', line('M4 10c7 0 9 5 9 12M13 19L16 8h8M5 22v2M4 23h2') + '<text x="16" y="18">R</text>'],
  ['Diameter dimension', line('M4 10c7 0 9 5 9 12M13 19L16 8h8M5 22v2M4 23h2') + '<text x="16" y="18">Ø</text>'],
  null,
  ['Text', '<text class="tiny" x="5" y="16">TEXT</text>'],
  ['Leader', line('M6 21l7-7h10') + '<text x="11" y="11">[2]</text>' + nodes([5, 22])],
  ['Leader 2', line('M10 6h12v7l-9 1-6 8M8 18l-1 4 4-1') + nodes([9, 6], [6, 22])],
  ['Dimension edit', line('M6 13v9M22 13v9M6 15h16M9 13l-3 2 3 2M19 13l3 2-3 2M9 6L6 8l3 2M19 6l3 2-3 2M11 8h1M14 8h1M17 8h1') + nodes([6, 22], [22, 22])],
  ['Dimension recenter', line('M5 13v9M21 13v9M5 16h16M11 5h11l-7 9') + nodes([5, 22], [21, 22], [15, 5])],
  null,
  ['Hatch', '<path fill="#fff" stroke-width="1.5" d="M5 5h9l2 4c6 0 8 5 6 10s-9 6-12 2l-1-4-4-3z"/>' + line('M5 10l5-5M5 14l9-9M8 16l8-8M10 20l10-10M12 23l11-11M17 23l6-6')],
  ['Hatch boundary', '<path fill="#bbb" stroke="#777" stroke-width="2" d="M5 5h9l2 4c6 0 8 5 6 10s-9 6-12 2l-1-4-4-3z"/>' + line('M8 16l8-8M10 20l10-10M12 23l11-11', 'stroke="#777"')],
  ['Dimension properties', line('M8 7v14M6 9l2-2 2 2M6 19l2 2 2-2M4 5h9M4 23h9') + nodes([13, 5], [13, 23]) + '<path fill="#999" d="M12 14l5-4h6v6l-4 2-6-1z"/>'],
  ['Check dimension', line('M7 7v14M5 9l2-2 2 2M5 19l2 2 2-2M3 5h9M3 23h9') + nodes([12, 5], [12, 23]) + line('M15 14l3 4 6-8', 'stroke-width="2"')],
  ['Text properties', '<text x="2" y="18">TEXT</text>' + hand],
  ['Find text', '<text x="2" y="17">TEXT</text><circle cx="14" cy="13" r="6"/>' + line('M11 18l-4 5', 'stroke-width="2"')],
  ['Scale text', '<text class="tiny pale" x="8" y="11">TEXT</text><text x="2" y="22">TEXT</text>'],
  ['Make 2-D drawing', '<path fill="#fff" d="M4 10l8-5 8 3v12l-8 4-8-4zM4 10l8 3 8-5M12 13v11"/><path fill="#f0781e" stroke="#a41" d="M20 7l4-5 3 2-5 5-4 3z"/>'],
  ['Linetypes', line('M8 12h16M8 16h16M8 20h16M8 24h16', 'stroke-dasharray="2 1"') + nodes([5, 12], [5, 16], [5, 20], [5, 24]) + hand],
  ['Point size', '<circle cx="12" cy="14" r="8" fill="#111"/><circle cx="9" cy="11" r="2" fill="#777" stroke="none"/>' + fly],
  null,
  ['Print', '<path fill="#fff" d="M10 5h12l-3 9H7z"/><path stroke="#777" d="M12 8h7M11 11h7"/><path fill="#ddd" stroke-width="1.5" d="M4 15l3-3M20 14l3-3v8l-4 5H4v-9h16v9"/><path stroke-width="2" d="M4 18h15"/>'],
  ['Display', '<path fill="#ccc" stroke="#888" d="M4 5h14v12H4z"/><path fill="#888" stroke="#333" d="M9 8h11v13H9z"/><path fill="#999" stroke="#555" d="M13 12h11v11H13z"/><path stroke="#d22" stroke-width="2" d="M5 4l5 5M10 5v4H6"/>' + fly],
];
document.getElementById('drafting').innerHTML = drafting.map(t => t ? tool(...t) : '<hr>').join('');

// ---- selection filter column ----
const cube = fill => `<path fill="${fill}" stroke="#666" d="M5 8l9-4 9 3v13l-8 4-10-3zM5 8l10 3 8-4M15 11v13"/>` +
  [[5, 8], [14, 4], [23, 7], [15, 11], [5, 21], [15, 24], [23, 20]].map(([x, y]) => `<circle cx="${x}" cy="${y}" r="1.8" fill="#555" stroke="none"/>`).join('');
const filters = [
  ['Stop', '<circle cx="14" cy="15" r="9.500" stroke="#b02020" stroke-width="3" fill="#fff"/><path stroke="#b02020" stroke-width="3" d="M14 10v9"/>'],
  ['Move gumball', line('M14 16V6M14 16l-8 5M14 16l8 5', 'stroke="#888" stroke-width="2"') + '<path fill="#888" stroke="none" d="M12 9l2-6 2 6zM3 23l3-5 3 4zM25 23l-3-5-3 4z"/>'],
  ['Rotate', '<g stroke="#888" stroke-width="1.500"><circle cx="14" cy="14" r="9"/><ellipse cx="14" cy="14" rx="4" ry="9"/><ellipse cx="14" cy="14" rx="10" ry="2"/></g>'],
  ['Scale', line('M14 15V6M14 15l-7 4M14 15l8 4', 'stroke="#888" stroke-width="2"') + '<path fill="#888" stroke="none" d="M11 4h6v5h-6z"/><circle cx="7" cy="20" r="3" fill="#777" stroke="none"/><circle cx="22" cy="20" r="3" fill="#777" stroke="none"/>', 1],
  ['Edit axes', line('M14 4v9M14 17v8M3 15h8M17 15h9M12 17l-8 7M16 13l5-5M12 6l2-2 2 2M12 23l2 2 2-2M5 13l-2 2 2 2M24 13l2 2-2 2', 'stroke="#555"') + nodes([14, 15])],
  ['Vertex', cube('#bbb') + '<circle cx="18" cy="11" r="2.500" fill="#eee"/>'],
  ['Edge', cube('#bbb') + line('M18 11v10', 'stroke="#fff" stroke-width="2"')],
  ['Face', cube('#aaa')],
  ['Object', cube('#ddd'), 1, 1],
  ['Brush', '<path fill="#bbb" stroke="#777" d="M6 6l7-1 5 10-4 4-6-6z"/><path stroke="#999" stroke-width="3" d="M15 16l8 8M7 17c-3 4 0 8 5 6"/>'],
  ['Patch', '<path fill="#ccc" stroke="#777" d="M5 12l10-8 8 5-9 10z"/><path fill="#aaa" stroke="#666" d="M13 15l12 2v9h-9z"/>' + line('M6 8l14 10M12 6l-4 13', 'stroke="#777"')],
  ['Clear', '<rect x="4" y="4" width="20" height="20" rx="4" fill="#aaa" stroke="#666" stroke-width="2"/>' + line('M9 9l10 10M19 9L9 19', 'stroke="#777" stroke-width="3"')],
  ['Options', '<path fill="#e250e2" stroke="#222" stroke-width="1.500" d="M12 6h4v3l4-2 2 3-2 2 5 1v4l-5 1 1 4-4 1-3-3-3 3-4-1 1-4-5-1v-4l5-1-2-2 2-3 4 2z"/><path fill="#888" stroke="#333" d="M12 6h4v10h-4z"/>', 1],
];
document.getElementById('filters').innerHTML = filters
  .map(([label, body, last, on]) => tool(label, body, `${last ? 'last' : ''} ${on ? 'on' : ''}`)).join('');

// ---- main tools, two per row ----
const mainTools = [
  ['Select', '<path fill="#fff" d="M10 7v12l3-3 2 5 2-1-2-5h4z"/>'],
  ['Points on', line('M11 18l8-8M16 10h3v3') + '<path fill="#fff" d="M5 17h6v6H5z"/><path fill="#88a0ff" d="M17 6h6v6h-6z"/>' + fly],
  ['Trim', '<path fill="#fff" d="M3 14h11v4H3z"/><path fill="#fff" stroke="#666" d="M13 18l4-3 6 6-4 4z"/><path fill="#223a8c" stroke="none" d="M12 6h8l-3 12-4 1z"/>'],
  ['Split', '<path fill="#fff" d="M4 14h19v5H4z"/><path fill="#223a8c" stroke="none" d="M14 6h7l-4 12h-3z"/>'],
  ['Join', '<path fill="#f5a21b" d="M5 6h3c-1-3 5-3 4 0h4v4c3-1 3 4 0 3v4h-4c0-3-4-3-3 0H5v-4c-3 1-3-4 0-3z"/><path fill="#fff" d="M13 13h3c-1-3 4-3 3 0h3v3c3 0 3 4 0 3v4h-3c0-2-3-2-3 0h-3v-4c-3 1-3-3 0-3z"/>'],
  ['Explode', '<path fill="#f79a1c" stroke="#b55" d="M2 27V8l5 8 8-9-1 11 8-9-4 10h6l-8 3z" stroke-width=".5"/>'],
  ['Curve', line('M8 9c16-3 18 11-2 12') + nodes([6, 9], [20, 6], [6, 21], [22, 23]) + fly],
  ['Interpolate', line('M8 9h10c4 4 4 9 0 12H8') + nodes([7, 9], [19, 9], [7, 21], [19, 21])],
  ['Conic', line('M5 23C5 12 10 8 15 8', 'stroke-width="2"') + line('M5 8h18') + nodes([5, 8], [15, 8], [23, 8], [5, 24])],
  ['Handle curve', nodes([7, 10], [12, 8], [18, 9], [21, 14], [19, 20], [13, 21], [7, 20])],
  ['Helix', line('M6 13c1 2 4 1 4-2s5-5 4 0-6 8-5 4 8-9 9-5-6 10-5 6 8-9 11-5', 'stroke="#666"') + nodes([5, 13], [19, 24])],
  ['Parabola', line('M9 8c13 7 11 15 4 15M6 23h16') + nodes([8, 7], [6, 23], [22, 23])],
  ['Polyline', line('M6 22L12 9l9 10') + dots([6, 22], [12, 9], [21, 19]) + fly],
  ['Line', line('M9 20L19 10') + nodes([9, 20], [19, 10])],
  ['Perpendicular line', line('M3 5c9 0 9 19 21 20', white) + line('M14 14v10') + nodes([14, 14], [14, 24])],
  ['Tangent line', line('M3 5c9 0 9 19 21 20', white) + line('M13 14h10') + nodes([13, 14], [23, 14])],
  ['Line by axes', axes + line('M16 6v9') + nodes([16, 6], [16, 15])],
  ['Sphere', '<circle cx="16" cy="17" r="7.500" fill="#eee"/>' + line('M6 7l8 8') + nodes([6, 7], [14, 15])],
  ['Circle', '<circle cx="14" cy="15" r="9.500"/>' + line('M14 15l6-7') + dots([14, 15], [20, 8]) + fly],
  ['Circle, deformable', '<circle cx="14" cy="15" r="8"/>' + nodes([7, 9], [14, 14])],
  ['Circle, diameter', '<circle cx="13" cy="15" r="9"/>' + line('M7 21L20 8') + nodes([20, 8], [7, 21])],
  ['Circle, around curve', '<circle cx="14" cy="15" r="9"/>' + axes + nodes([15, 14], [23, 14])],
  ['Arc', line('M7 7v16l15-8C20 9 14 7 7 7') + dots([7, 7], [7, 23], [22, 15]) + fly],
  ['Arc, three points', line('M6 7c9 0 15 6 16 16') + nodes([6, 7], [15, 9], [22, 23])],
  ['Arc, direction', line('M6 7c10 1 16 7 16 16V7') + nodes([6, 7], [22, 7], [22, 23])],
  ['Arc, tangent', line('M4 15l8-8 1-3 2 5h7l-4 6 3 6-6-1-3 5-1-6z', white) + line('M9 10l9-1v10') + nodes([9, 10], [18, 9], [13, 15], [18, 19])],
  ['Ellipse', '<ellipse cx="14" cy="15" rx="9.500" ry="7"/>' + line('M14 8v7h9') + nodes([14, 8], [14, 15], [23, 15]) + fly],
  ['Ellipse, diameter', '<ellipse cx="14" cy="15" rx="9.500" ry="7"/>' + line('M5 15h18') + nodes([14, 8], [5, 15], [23, 15])],
  ['Rectangle', line('M5 10h17v10H5z') + dots([22, 10], [5, 20]) + fly],
  ['Rectangle, three points', line('M6 10h17v10H6z', 'stroke-width="1.500"') + nodes([6, 10], [6, 20], [23, 17])],
  ['Rounded rectangle', '<rect x="5" y="9" width="17" height="12" rx="4"/>' + nodes([5, 9], [10, 9], [5, 14])],
  ['Vertical rectangle', axes + line('M9 7h10v16H9z', 'stroke-width="1.500"') + nodes([9, 7], [19, 13], [9, 23])],
  ['Polygon', line('M10 7h8l4 7-4 8h-8l-4-8zM13 14h9') + dots([13, 14], [22, 14]) + fly],
  ['Square', line('M7 7h15v14H7zM15 14l6-6', 'stroke-width="1.300"') + nodes([21, 8], [15, 14])],
  ['Square, edge', line('M7 8h14v14H7z', 'stroke-width="1.500"') + nodes([8, 8], [21, 8])],
  ['Star', line('M12 5l3 6 8-2-5 6 4 6-7-1-4 5-1-7-6-3 7-3z') + nodes([22, 8], [15, 14], [20, 14])],
];
document.getElementById('mainTools').innerHTML = mainTools.map(t => tool(...t)).join('');

// ---- layer panel buttons ----
const layerTools = [
  ['New layer', '<path fill="#fff" stroke-width="2" d="M6 6h12l4 4v14H6z"/>'],
  ['New sublayer', '<path fill="#fff" stroke-width="2" d="M4 4h10v14H4zM12 11h8l4 4v10H12z"/>'],
  ['Delete', line('M5 6l17 17M23 5L5 23', 'stroke="#444" stroke-width="4"')],
  ['Up', '<path fill="#999" stroke-width="1.500" d="M4 18L14 8l10 10z"/>'],
  ['Down', '<path fill="#999" stroke-width="1.500" d="M4 10l10 10 10-10z"/>'],
  ['Parent', '<path fill="#555" d="M18 5v18L8 14z"/>'],
  ['Filter', '<path fill="#777" stroke-width="2" d="M5 5h18l-7 9v10l-4-3v-7z"/>'],
  ['Columns', '<path fill="#ccc" stroke="#888" stroke-width="2" d="M6 5h12l4 4v15H6zM14 9v11M9 14h10"/>'],
  ['Tools', line('M5 24L17 10', 'stroke-width="4"') + line('M10 6h9l5 6', 'stroke-width="4"')],
  ['Help', '<circle cx="14" cy="14" r="10" fill="#555"/>' + line('M11 11c0-5 7-4 6 0 0 2-3 2-3 5M14 18v3', 'stroke="#fff" stroke-width="2"')],
];
document.getElementById('layerTools').innerHTML = layerTools.map(([l, b]) => tool(l, b, '')).join('');

// ---- layers: name, depth, open, bulb on, locked, colour ----
const layers = [
  ['3D', 0, 1, 1, 0, '#000'],
  ['ground', 1, 0, 0, 0, '#000'],
  ['retaining wall', 1, 0, 1, 0, '#000'],
  ['SU landform', 1, 0, 0, 0, '#000', 'selected'],
  ['SU contour', 1, 0, 1, 0, '#000'],
  ['glass', 1, 0, 1, 0, '#7fffbf'],
  ['person', 0, 0, 0, 0, '#000'],
  ['2D', 0, 1, 1, 0, '#000'],
  ['picture frame', 1, 0, 0, 1, '#000'],
  ['plan', 1, 0, 0, 0, '#ff0000'],
  ['guide line', 1, 0, 0, 1, '#000'],
  ['image', 1, 0, 0, 1, '#000'],
  ['elevation', 1, 0, 0, 0, '#000'],
  ['Google Earth Ter...', 0, 0, 1, 0, '#694200'],
  ['Layer0', 0, 0, 1, 0, '#ff5a5a'],
  ['Google Earth Sn...', 0, 0, 1, 0, '#009688'],
  ['Make2D', 0, 1, 1, 0, '#000', 'current-layer'],
  ['visible', 1, 1, 1, 0, '#000'],
  ['lines', 2, 0, 1, 0, '#000'],
];
document.getElementById('layerRows').innerHTML = layers.map(([name, depth, open, on, locked, color, cls = '']) => {
  const current = cls === 'current-layer';
  const glass = name === 'glass';
  return `<tr class="d${depth} ${open ? 'open' : ''} ${cls}">
    <td><div class="name">${open ? '<i class="box"></i>' : ''}${name}</div></td>
    <td>${current ? '<svg><use href="#tick"/></svg>' : ''}</td>
    <td>${current ? '' : `<svg fill="${on ? '#ffff8c' : '#3f97e8'}"><use href="#bulb"/></svg>`}</td>
    <td>${current ? '' : `<svg><use href="#lock-${locked ? 'shut' : 'open'}"/></svg>`}</td>
    <td><div class="chip" style="background:${color}"></div></td>
    <td><div class="mat"><i class="ball ${glass ? 'filled' : ''}"></i>${glass ? 'glass' : ''}</div></td>
    <td class="line">${name === 'guide line' ? 'Dashed' : 'Continuous'}</td>
    <td><div class="gem" style="background:${color}"></div></td>
    <td class="line">Default</td>
  </tr>`;
}).join('');
```
